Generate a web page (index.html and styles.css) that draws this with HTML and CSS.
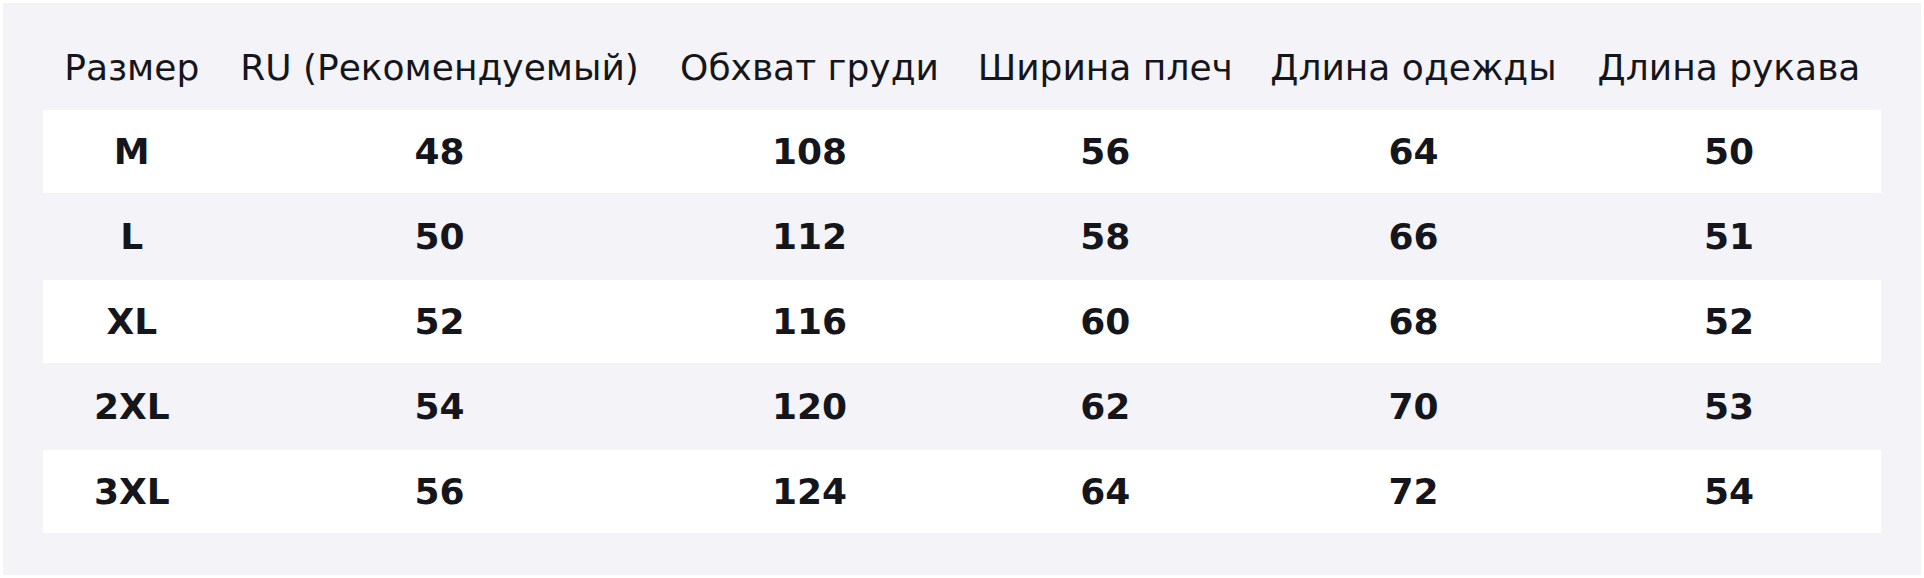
FILE: index.html
```html
<!DOCTYPE html>
<html lang="ru">
<head>
<meta charset="utf-8">
<title>Таблица размеров</title>
<link rel="stylesheet" href="styles.css">
</head>
<body>
<div class="frame">
  <div class="panel">
    <table class="sizes">
      <colgroup>
        <col class="c1"><col class="c2"><col class="c3"><col class="c4"><col class="c5"><col class="c6">
      </colgroup>
      <thead>
        <tr class="head">
          <th>Размер</th>
          <th>RU (Рекомендуемый)</th>
          <th>Обхват груди</th>
          <th>Ширина плеч</th>
          <th>Длина одежды</th>
          <th>Длина рукава</th>
        </tr>
      </thead>
      <tbody>
        <tr class="row light"><td>M</td><td>48</td><td>108</td><td>56</td><td>64</td><td>50</td></tr>
        <tr class="row plain"><td>L</td><td>50</td><td>112</td><td>58</td><td>66</td><td>51</td></tr>
        <tr class="row light"><td>XL</td><td>52</td><td>116</td><td>60</td><td>68</td><td>52</td></tr>
        <tr class="row plain"><td>2XL</td><td>54</td><td>120</td><td>62</td><td>70</td><td>53</td></tr>
        <tr class="row light"><td>3XL</td><td>56</td><td>124</td><td>64</td><td>72</td><td>54</td></tr>
      </tbody>
    </table>
  </div>
</div>
</body>
</html>
```
FILE: styles.css
```css
html, body {
  margin: 0;
  padding: 0;
  background: #ffffff;
}
.frame {
  padding: 3px;
}
.panel {
  background: #f3f3f8;
  padding: 22px 40px 42px 40px;
}
.sizes {
  width: 1838px;
  table-layout: fixed;
  border-collapse: collapse;
  border-spacing: 0;
  font-family: "DejaVu Sans", "Liberation Sans", sans-serif;
  font-size: 36px;
  color: #15161b;
}
.c1 { width: 177.5px; }
.c2 { width: 438px; }
.c3 { width: 302px; }
.c4 { width: 289.5px; }
.c5 { width: 327px; }
.c6 { width: 304px; }
.sizes th, .sizes td {
  padding: 0;
  text-align: center;
  vertical-align: middle;
  white-space: nowrap;
}
.sizes th {
  font-weight: normal;
}
.sizes td {
  font-weight: bold;
}
.head { height: 85px; }
.light { height: 83px; background: #ffffff; }
.plain { height: 87px; }
```
